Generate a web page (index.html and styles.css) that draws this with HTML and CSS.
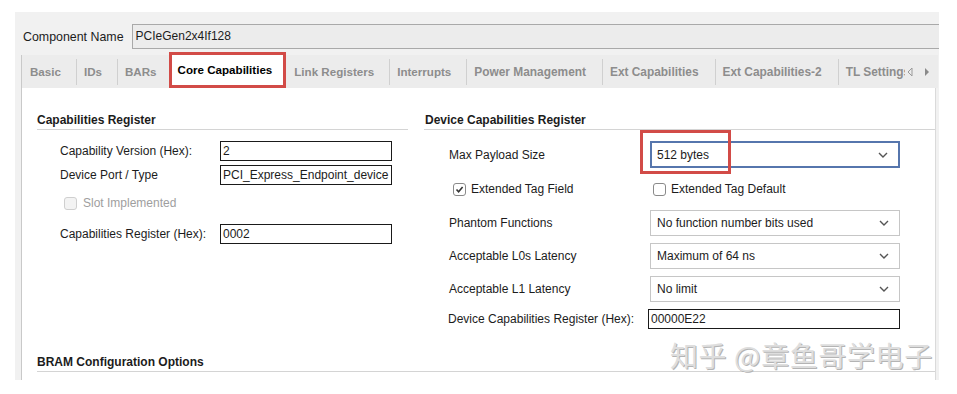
FILE: index.html
```html
<!DOCTYPE html>
<html lang="en">
<head>
    <meta charset="UTF-8">
    <title>Core Capabilities</title>
    <link rel="stylesheet" href="styles.css">
</head>
<body>
<div class="dialog">
    <div class="name-row">
        <span class="name-label">Component Name</span>
        <div class="name-input">PCIeGen2x4If128</div>
    </div>

    <div class="tabs">
        <div class="tab-list">
            <div class="tab">Basic</div>
            <div class="tab">IDs</div>
            <div class="tab before-active">BARs</div>
            <div class="tab active">Core Capabilities</div>
            <div class="tab after-active">Link Registers</div>
            <div class="tab">Interrupts</div>
            <div class="tab">Power Management</div>
            <div class="tab">Ext Capabilities</div>
            <div class="tab">Ext Capabilities-2</div>
            <div class="tab last">TL Settings</div>
        </div>
        <div class="tab-arrows">
            <svg width="6" height="10" viewBox="0 0 6 10"><polygon points="5,1 1,5 5,9" fill="none" stroke="#9a9a9a" stroke-width="1"/></svg>
            <svg width="6" height="10" viewBox="0 0 6 10"><polygon points="1,1 5,5 1,9" fill="#8a8a8a"/></svg>
        </div>
    </div>

    <div class="page">
        <div class="columns">
            <div class="col col-left">
                <div class="section-title">Capabilities Register</div>
                <div class="field-row first">
                    <span>Capability Version (Hex):</span>
                    <div class="text-box">2</div>
                </div>
                <div class="field-row second">
                    <span>Device Port / Type</span>
                    <div class="text-box">PCI_Express_Endpoint_device</div>
                </div>
                <div class="check-row slot">
                    <span class="check disabled"></span>
                    <span class="check-text disabled">Slot Implemented</span>
                </div>
                <div class="field-row fourth">
                    <span>Capabilities Register (Hex):</span>
                    <div class="text-box">0002</div>
                </div>
            </div>

            <div class="col col-right">
                <div class="section-title">Device Capabilities Register</div>
                <div class="select-row payload">
                    <span>Max Payload Size</span>
                    <div class="select focused">
                        <span>512 bytes</span>
                        <svg class="chevron" width="10" height="6" viewBox="0 0 10 6"><path d="M1 1 L5 5 L9 1" fill="none" stroke="#555" stroke-width="1.4"/></svg>
                        <div class="mark"></div>
                    </div>
                </div>
                <div class="check-pair">
                    <div class="check-cell">
                        <span class="check on">
                            <svg width="11" height="11" viewBox="0 0 11 11"><path d="M2.5 5.5 L4.6 7.8 L8.6 3" fill="none" stroke="#333" stroke-width="1.6"/></svg>
                        </span>
                        <span class="check-text">Extended Tag Field</span>
                    </div>
                    <div class="check-cell">
                        <span class="check"></span>
                        <span class="check-text">Extended Tag Default</span>
                    </div>
                </div>
                <div class="select-row phantom">
                    <span>Phantom Functions</span>
                    <div class="select">
                        <span>No function number bits used</span>
                        <svg class="chevron" width="10" height="6" viewBox="0 0 10 6"><path d="M1 1 L5 5 L9 1" fill="none" stroke="#555" stroke-width="1.4"/></svg>
                    </div>
                </div>
                <div class="select-row">
                    <span>Acceptable L0s Latency</span>
                    <div class="select">
                        <span>Maximum of 64 ns</span>
                        <svg class="chevron" width="10" height="6" viewBox="0 0 10 6"><path d="M1 1 L5 5 L9 1" fill="none" stroke="#555" stroke-width="1.4"/></svg>
                    </div>
                </div>
                <div class="select-row">
                    <span>Acceptable L1 Latency</span>
                    <div class="select">
                        <span>No limit</span>
                        <svg class="chevron" width="10" height="6" viewBox="0 0 10 6"><path d="M1 1 L5 5 L9 1" fill="none" stroke="#555" stroke-width="1.4"/></svg>
                    </div>
                </div>
                <div class="hex-row">
                    <span>Device Capabilities Register (Hex):</span>
                    <div class="text-box">00000E22</div>
                </div>
            </div>
        </div>

        <div class="section-title bram">BRAM Configuration Options</div>
    </div>
</div>

<div class="watermark">知乎 @章鱼哥学电子</div>
</body>
</html>
```

FILE: styles.css
```css
body {
    margin: 0;
    width: 957px;
    height: 394px;
    background: #fff;
    font-family: "Liberation Sans", Arial, sans-serif;
    font-size: 12px;
    color: #1c1c1c;
    position: relative;
    overflow: hidden;
}

.dialog {
    margin: 12px 0 0 15px;
    width: 924px;
    height: 368px;
    background: #f1f1f1;
    overflow: hidden;
}

.name-row {
    display: flex;
    align-items: center;
    height: 25px;
    margin-top: 12px;
    padding-left: 8px;
}

.name-label {
    font-size: 12.4px;
}

.name-input {
    flex: 1;
    height: 23px;
    line-height: 23px;
    margin-left: 8px;
    padding-left: 3px;
    background: #ececec;
    border: 1px solid #a9a9a9;
    border-right: none;
}

.tabs {
    display: flex;
    align-items: center;
    height: 33px;
    margin: 6px 0 0 6px;
    width: 916px;
    background: #ececec;
    border-left: 1px solid #c9c9c9;
}

.tab-list {
    display: flex;
    align-items: center;
    height: 33px;
    flex: 1;
    min-width: 0;
    padding-left: 1px;
}

.tab {
    height: 26px;
    line-height: 26px;
    padding: 0 15px 0 7px;
    border-right: 1px solid #d0d0d0;
    font-size: 11.6px;
    font-weight: bold;
    color: #8d8d8d;
    white-space: nowrap;
}

.tab.before-active {
    border-right: none;
    padding-right: 12px;
}

.tab.active {
    align-self: flex-end;
    height: 36px;
    line-height: 30px;
    box-sizing: border-box;
    padding: 0 11px 0 6px;
    background: #fff;
    border: 3px solid #d24b47;
    color: #000;
}

.tab.after-active {
    padding-left: 8px;
}

.tab:nth-child(n+7) {
    font-size: 11.9px;
    padding-right: 16px;
}

.tab.last {
    border-right: none;
    flex: 1;
    min-width: 0;
    overflow: hidden;
    padding-right: 0;
}

.tab-arrows {
    display: flex;
    align-items: center;
    gap: 11px;
    padding: 0 8px 0 2px;
}

.page {
    margin-left: 6px;
    width: 915px;
    height: 292px;
    background: #fff;
    border-left: 1px solid #c9c9c9;
    border-right: 1px solid #dadada;
    box-sizing: border-box;
    padding: 24px 0 0 15px;
}

.columns {
    display: flex;
    gap: 16px;
}

.col-left {
    width: 371px;
}

.col-right {
    flex: 1;
}

.section-title {
    font-weight: bold;
    line-height: 16px;
    padding-bottom: 1px;
    border-bottom: 1px solid #d4d4d4;
}

.col-right .section-title {
    padding-left: 1px;
}

.field-row {
    display: grid;
    grid-template-columns: 160px 172px;
    align-items: center;
    padding-left: 23px;
    height: 20px;
}

.field-row.first {
    margin-top: 11px;
}

.field-row.second {
    margin-top: 4px;
}

.field-row.fourth {
    margin-top: 11px;
}

.text-box {
    height: 18px;
    line-height: 18px;
    border: 1px solid #1a1a1a;
    padding-left: 2px;
    white-space: nowrap;
    overflow: hidden;
    background: #fff;
}

.check-row {
    display: flex;
    align-items: center;
    gap: 6px;
    height: 20px;
}

.check-row.slot {
    margin-top: 8px;
    padding-left: 27px;
}

.check {
    display: inline-flex;
    align-items: center;
    justify-content: center;
    width: 13px;
    height: 13px;
    box-sizing: border-box;
    border: 1px solid #8a8a8a;
    border-radius: 3px;
    background: #fff;
}

.check.disabled {
    border-color: #cfcfcf;
    background: #f3f3f3;
}

.check-text.disabled {
    color: #9e9e9e;
}

.select-row {
    display: grid;
    grid-template-columns: 201px 250px;
    align-items: center;
    padding-left: 25px;
    margin-top: 7px;
}

.select-row.payload {
    margin-top: 11px;
}

.select-row.phantom {
    margin-top: 11px;
}

.select {
    position: relative;
    display: flex;
    align-items: center;
    justify-content: space-between;
    height: 26px;
    box-sizing: border-box;
    padding: 0 10px 0 6px;
    border: 1px solid #c6c6c6;
    background: #fff;
}

.select.focused {
    height: 27px;
    border: 2px solid #5676ad;
    padding-left: 5px;
}

/* red annotation box drawn over the screenshot */
.mark {
    position: absolute;
    left: -12px;
    top: -13px;
    width: 91px;
    height: 44px;
    box-sizing: border-box;
    border: 3px solid #d24b47;
}

.check-pair {
    display: flex;
    height: 20px;
    margin-top: 11px;
    padding-left: 29px;
}

.check-cell {
    display: flex;
    align-items: center;
    gap: 5px;
    width: 200px;
}

.hex-row {
    display: grid;
    grid-template-columns: 200px 252px;
    align-items: center;
    padding-left: 24px;
    margin-top: 7px;
    height: 20px;
}

.section-title.bram {
    margin-top: 25px;
}

.watermark {
    position: absolute;
    left: 670px;
    top: 337px;
    font-family: "Noto Sans CJK SC", sans-serif;
    font-size: 28px;
    letter-spacing: 0.6px;
    line-height: 36px;
    color: #dedede;
    text-shadow: 1px 1px 0 #b4b4b4;
    white-space: nowrap;
}
```
